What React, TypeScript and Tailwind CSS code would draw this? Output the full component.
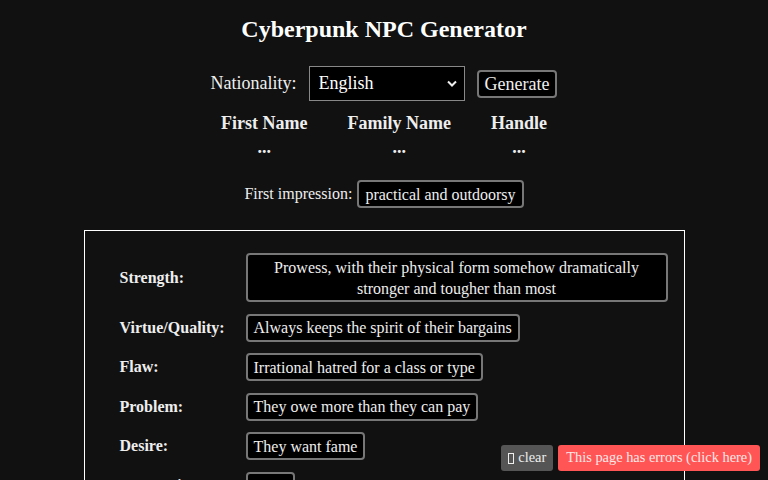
import { useState } from 'react';

const traits: { label: string; value: string }[] = [
  { label: 'Strength:', value: 'Prowess, with their physical form somehow dramatically stronger and tougher than most' },
  { label: 'Virtue/Quality:', value: 'Always keeps the spirit of their bargains' },
  { label: 'Flaw:', value: 'Irrational hatred for a class or type' },
  { label: 'Problem:', value: 'They owe more than they can pay' },
  { label: 'Desire:', value: 'They want fame' },
  { label: 'Occupation:', value: 'Fixer' },
];

function ValueBox({ children, center }: { children: React.ReactNode; center?: boolean }) {
  return (
    <span
      className={`inline-block bg-black border-2 border-[#777] rounded-[4px] px-[6px] py-[1.5px] text-[16px] leading-[21px] ${center ? 'text-center' : ''}`}
    >
      {children}
    </span>
  );
}

export default function App() {
  const [nationality, setNationality] = useState('English');

  return (
    <div className="min-h-screen bg-[#111] text-[#eee] font-['Liberation_Serif',serif] overflow-hidden">
      <h1 className="text-center font-bold text-[24px] leading-[28px] pt-[15px] text-white">Cyberpunk NPC Generator</h1>

      <div className="flex justify-center items-center mt-[23px] text-[18px]">
        <span>Nationality:</span>
        <div className="relative ml-[12px]">
          <select
            value={nationality}
            onChange={e => setNationality(e.target.value)}
            className="appearance-none w-[156px] h-[35px] bg-black text-white border border-[#888] pl-[9px] pr-6 text-[18px] outline-none"
          >
            <option>English</option>
            <option>Japanese</option>
            <option>Korean</option>
          </select>
          <svg className="absolute right-[8px] top-[14px] pointer-events-none" width="10" height="7" viewBox="0 0 10 7">
            <path d="M1 1.5 L5 5.5 L9 1.5" stroke="#eee" strokeWidth="2" fill="none" />
          </svg>
        </div>
        <button className="ml-[12px] h-[28px] px-[6px] bg-black border-2 border-[#777] rounded-[4px] leading-[22px] text-[18px]">
          Generate
        </button>
      </div>

      <div className="flex justify-center gap-[40px] mt-[10px] text-[18px]">
        {['First Name', 'Family Name', 'Handle'].map(h => (
          <div key={h} className="flex flex-col items-center">
            <div className="font-bold leading-[24px]">{h}</div>
            <div className="font-bold leading-[24px]">...</div>
          </div>
        ))}
      </div>

      <div className="flex justify-center items-center mt-[21px] text-[16px]">
        <span className="mr-[5px]">First impression:</span>
        <ValueBox>practical and outdoorsy</ValueBox>
      </div>

      <div className="mx-auto mt-[22px] w-[601px] border border-white border-b-0 pt-[22px] pl-[35px]">
        <div className="flex flex-col gap-[11.5px]">
          {traits.map((t, i) => (
            <div key={t.label} className="flex items-center">
              <div className="w-[126px] font-bold text-[16px]">{t.label}</div>
              <div className="w-[422px]">
                <ValueBox center={i === 0}>{t.value}</ValueBox>
              </div>
            </div>
          ))}
        </div>
      </div>

      <div className="fixed right-[8px] bottom-[9px] flex gap-[5px] text-[14.4px]">
        <button className="h-[26px] px-[7px] bg-[#555] text-[#eee] rounded-[3px] flex items-center gap-[4px]">
          <span className="inline-block w-[6px] h-[11px] border border-[#eee]" />
          clear
        </button>
        <button className="h-[26px] px-[8px] bg-[#f55] text-[#ffe8e8] rounded-[3px]">This page has errors (click here)</button>
      </div>
    </div>
  );
}
